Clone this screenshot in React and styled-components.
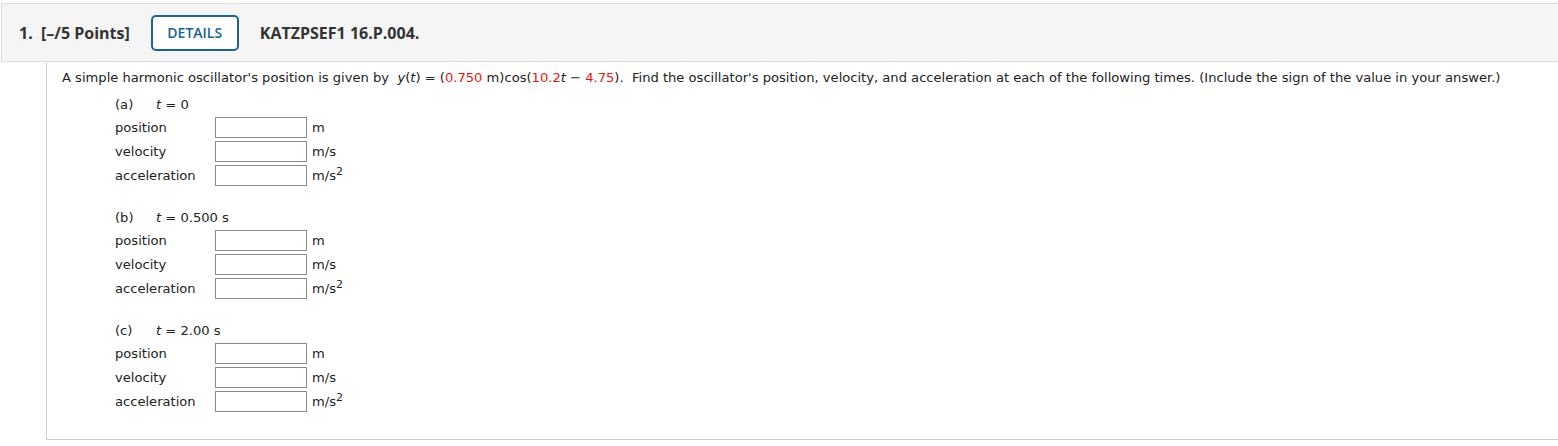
import React from 'react';
import styled, { createGlobalStyle } from 'styled-components';

const GlobalStyle = createGlobalStyle`
  html, body {
    margin: 0;
    padding: 0;
    background: #fff;
    overflow: hidden;
  }
`;

const parts = [
  { label: '(a)', time: '0', unitTail: '' },
  { label: '(b)', time: '0.500', unitTail: ' s' },
  { label: '(c)', time: '2.00', unitTail: ' s' },
];

const rows = [
  { name: 'position', unit: 'm' },
  { name: 'velocity', unit: 'm/s' },
  { name: 'acceleration', unit: 'm/s', sup: '2' },
];

const App = () => (
  <Page>
    <GlobalStyle />
    <Header>
      <Title>1.  [–/5 Points]</Title>
      <DetailsButton>DETAILS</DetailsButton>
      <Title>KATZPSEF1 16.P.004.</Title>
    </Header>
    <Body>
      <Question>
        A simple harmonic oscillator's position is given by&nbsp;{' '}
        <i>y</i>(<i>t</i>) = (<Red>0.750</Red> m)cos(<Red>10.2</Red><i>t</i> − <Red>4.75</Red>).&nbsp; Find the
        oscillator's position, velocity, and acceleration at each of the following times. (Include the sign of
        the value in your answer.)
      </Question>
      <Parts>
        {parts.map((p) => (
          <Part key={p.label}>
            <PartLabel>
              <PartTag>{p.label}</PartTag>
              <span>
                <i>t</i> = {p.time}
                {p.unitTail}
              </span>
            </PartLabel>
            {rows.map((r) => (
              <Row key={r.name}>
                <RowName>{r.name}</RowName>
                <AnswerBox type="text" />
                <Unit>
                  {r.unit}
                  {r.sup && <sup>{r.sup}</sup>}
                </Unit>
              </Row>
            ))}
          </Part>
        ))}
      </Parts>
    </Body>
  </Page>
);

export default App;

const Page = styled.div`
  padding: 3px 0 0 1px;
  width: 1600px;
`;

const Header = styled.div`
  display: flex;
  align-items: center;
  gap: 21px;
  height: 57px;
  padding-left: 17px;
  background: #f5f5f5;
  border: 1px solid #dcdcdc;
  border-right: none;
  font-family: 'Open Sans', sans-serif;
`;

const Title = styled.span`
  font-size: 16px;
  font-weight: 700;
  color: #333;
  white-space: pre;
`;

const DetailsButton = styled.button`
  width: 88px;
  height: 36px;
  border: 2px solid #1a6494;
  border-radius: 5px;
  background: #fff;
  color: #1a6494;
  font-family: 'Open Sans', sans-serif;
  font-size: 14px;
  font-weight: 600;
  padding: 0;
`;

const Body = styled.div`
  margin-left: 45px;
  border-left: 1px solid #cfcfcf;
  border-bottom: 1px solid #cfcfcf;
  padding: 7px 0 26px 15px;
  font-family: 'DejaVu Sans', Verdana, sans-serif;
  font-size: 13.1px;
  color: #222;
`;

const Question = styled.div`
  line-height: 18px;
  margin-bottom: 9px;
  white-space: nowrap;
`;

const Red = styled.span`
  color: #e8150e;
`;

const Parts = styled.div`
  display: flex;
  flex-direction: column;
  gap: 22px;
  padding-left: 53px;
`;

const Part = styled.div`
  display: flex;
  flex-direction: column;
`;

const PartLabel = styled.div`
  display: flex;
  line-height: 18px;
  height: 19px;
`;

const PartTag = styled.span`
  width: 41px;
`;

const Row = styled.div`
  display: flex;
  align-items: center;
  height: 24px;
`;

const RowName = styled.span`
  width: 100px;
`;

const AnswerBox = styled.input`
  box-sizing: border-box;
  width: 92px;
  height: 21px;
  margin: 0 5px 0 0;
  border: 1px solid #8a8a8a;
  padding: 0;
  background: #fff;
`;

const Unit = styled.span`
  sup {
    font-size: 11px;
    line-height: 0;
  }
`;
